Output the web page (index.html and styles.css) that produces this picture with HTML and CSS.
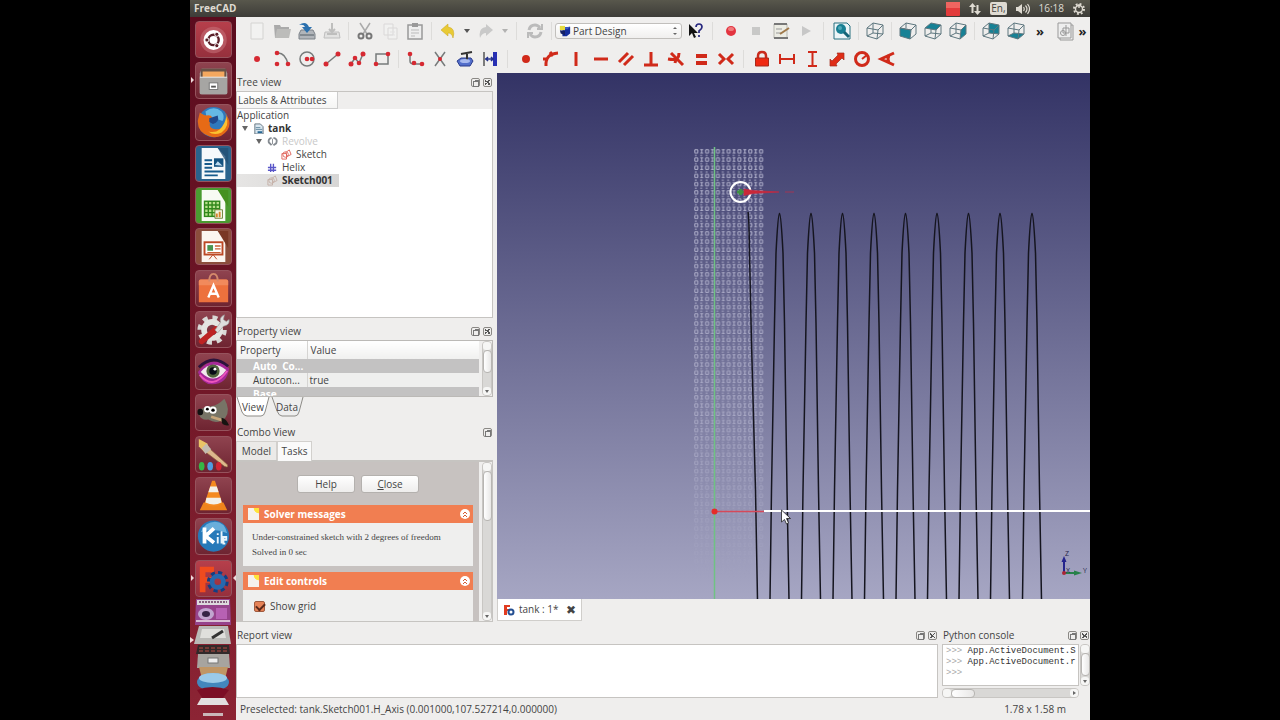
FILE: index.html
```html
<!DOCTYPE html>
<html lang="en">

<head>
    <meta charset="UTF-8">
    <meta name="viewport" content="width=device-width, initial-scale=1.0">
    <title>FreeCAD</title>
    <link rel="stylesheet" href="styles.css">
</head>

<body>
    <div class="desktop">
        <header class="topbar">
            <span class="app-name">FreeCAD</span>
            <div class="indicators">
                <svg width="14" height="14" viewBox="0 0 14 14"><rect width="14" height="14" rx="1" fill="#e23b3b"/><rect width="14" height="6" fill="#ee6560"/></svg>
                <svg width="12" height="12" viewBox="0 0 12 12" fill="#dfdbd2"><path d="M3.500 0L7 4H4.500V10H2.500V4H0z"/><path d="M8.500 12L5 8H7.500V2H9.500V8H12z"/></svg>
                <span class="lang">En,</span>
                <svg width="14" height="12" viewBox="0 0 14 12" fill="none" stroke="#dfdbd2"><path d="M0 4h2l4-3v10l-4-3H0z" fill="#dfdbd2" stroke="none"/><path d="M7.500 4q1.500 2 0 4M9.500 2.500q3 3.500 0 7M11.500 1q4 5 0 10" stroke-width="1.200"/></svg>
                <span class="clock">16:18</span>
                <svg width="12" height="12" viewBox="0 0 12 12" fill="none" stroke="#dfdbd2"><circle cx="6" cy="6" r="5" stroke-width="2" stroke-dasharray="1.900 2.027"/><circle cx="6" cy="6" r="3.500" stroke-width="1.400"/><path d="M6 1v4" stroke-width="1.400"/></svg>
            </div>
        </header>

        <div class="workspace">
            <nav class="launcher">
                <div class="tiles">
                    <button class="tile tile-red" aria-label="Dash"><svg viewBox="0 0 37 37"><circle cx="18.500" cy="19" r="14" fill="#c97880" opacity=".5"/><circle cx="18.500" cy="19" r="10.500" fill="#fff"/><circle cx="18.500" cy="19" r="5.500" fill="none" stroke="#5b2029" stroke-width="2.500"/><g fill="#5b2029" stroke="#fff"><circle cx="11.500" cy="19" r="2.200"/><circle cx="22" cy="13" r="2.200"/><circle cx="22" cy="25" r="2.200"/></g></svg></button>
                    <button class="tile running" aria-label="Files"><svg viewBox="0 0 37 37"><path d="M6 6h25l2 5v20q0 2-2 2H6q-2 0-2-2V11z" fill="#b5b3af"/><rect x="5" y="6" width="27" height="9" fill="#675348"/><rect x="7" y="9" width="23" height="6" fill="#f4a85f"/><rect x="4" y="15" width="29" height="18" rx="1" fill="#a6a5a3"/><path d="M4 15h29" stroke="#eee"/><rect x="14" y="21" width="9" height="7" fill="#fff" stroke="#777"/><path d="M16 25h5" stroke="#555" stroke-width="2"/></svg></button>
                    <button class="tile" aria-label="Firefox"><svg viewBox="0 0 37 37"><circle cx="18.500" cy="18" r="16" fill="#2f79bd"/><path d="M10 7q9-7 17 0 4 5 1 10l-8-3-8 3z" fill="#65b9e5"/><path d="M4 8q4 3 7 3 5-1 6 2l-2 5q-2 5 3 7 9 3 13-6 3-6-1-11 9 10 3 19-8 10-19 6Q1 29 2 16z" fill="#e66a16"/><path d="M32 12q4 11-5 17-8 4-14-1 7 2 12-2 6-6 7-14z" fill="#fbc12f"/><path d="M14 14l9-3q2 7-5 9l-4-2z" fill="#20498d"/></svg></button>
                    <button class="tile tile-blue" aria-label="Writer"><svg viewBox="0 0 37 37"><path d="M6 2h17l8 9v24H6z" fill="#f6f9fb"/><path d="M23 2h11v18z" fill="#235076" opacity=".8"/><g stroke="#175b8c" stroke-width="2"><path d="M9 15h8M9 19h8M9 23h8M9 27h20M9 31h14"/></g><rect x="19" y="13" width="10" height="9" fill="#14527f"/><path d="M20 20l3-4 5 5z" fill="#bedbf0"/></svg></button>
                    <button class="tile tile-green" aria-label="Calc"><svg viewBox="0 0 37 37"><path d="M6 2h17l8 9v24H6z" fill="#f8fbf3"/><path d="M23 2h11v18z" fill="#45911f"/><rect x="9" y="14" width="16" height="16" fill="#b9e18c" stroke="#30881b" stroke-width="1.500"/><path d="M13 14v16M17 14v16M21 14v16M9 18h16M9 22h16M9 26h16" stroke="#30881b" stroke-width="1.500"/><path d="M20 23h8v9h-8z" fill="#f4f8e5" stroke="#70843b"/><path d="M22 31v-4M25 31v-6" stroke="#d7842d" stroke-width="2"/></svg></button>
                    <button class="tile tile-brown" aria-label="Impress"><svg viewBox="0 0 37 37"><path d="M6 2h17l8 9v24H6z" fill="#fbf5f0"/><path d="M23 2h11v18z" fill="#7a3825"/><rect x="9" y="14" width="19" height="13" fill="#fff" stroke="#bc4825" stroke-width="2"/><rect x="12" y="17" width="6" height="6" fill="#4a9451"/><path d="M20 18h6M20 21h6M12 25h14" stroke="#c96036" stroke-width="1.500"/><path d="M14 32l4-5 4 5" fill="none" stroke="#bc4825"/></svg></button>
                    <button class="tile" aria-label="Software Center"><svg viewBox="0 0 37 37"><path d="M3 11q0-2 2-2h27q2 0 2 2v22H3z" fill="#ed713d"/><path d="M3 11q0-2 2-2h27q2 0 2 2v4H3z" fill="#f18a5c"/><path d="M14 11q0-8 4.500-8t4.500 8" fill="none" stroke="#d5896b" stroke-width="2"/><path d="M13 28l5.500-13 5.500 13M15 24h7" fill="none" stroke="#fff" stroke-width="2.500"/></svg></button>
                    <button class="tile" aria-label="System Settings"><svg viewBox="0 0 37 37"><circle cx="17" cy="19" r="13" fill="none" stroke="#d9d9d6" stroke-width="5" stroke-dasharray="5.200 5.010"/><circle cx="17" cy="19" r="8.500" fill="none" stroke="#e4e4e1" stroke-width="6"/><path d="M6 31L21 18" stroke="#bd2323" stroke-width="6" stroke-linecap="round"/><path d="M20 19l6-8q-2-5 4-8l-1 5 3 2 3-2q1 6-6 7l-6 7z" fill="#ddd" stroke="#999" stroke-width=".7"/></svg></button>
                    <button class="tile" aria-label="Viewer"><svg viewBox="0 0 37 37"><path d="M2 19Q17-1 35 15q-2 17-18 17Q6 32 2 19z" fill="#a52998"/><path d="M5 19q12-14 27-2-12 17-27 2z" fill="#f3e9ed"/><circle cx="18" cy="18" r="7" fill="#50633d"/><circle cx="18" cy="18" r="4" fill="#080c17"/><circle cx="20" cy="16" r="1.500" fill="#fff"/><path d="M3 14Q18-1 34 13" fill="none" stroke="#2c143c" stroke-width="3"/><path d="M4 22q14 17 29-4" fill="none" stroke="#ed55bd" stroke-width="2"/></svg></button>
                    <button class="tile" aria-label="GIMP"><svg viewBox="0 0 37 37"><path d="M3 17q5-5 13-5 7-1 14-8 7 12 1 20-8 8-18 2-8 1-10-6z" fill="#777466"/><circle cx="12" cy="15" r="3.500" fill="#fff"/><circle cx="18" cy="16" r="3.800" fill="#fff"/><circle cx="12" cy="15" r="1.500"/><circle cx="18" cy="16" r="1.800"/><ellipse cx="4.500" cy="18" rx="3" ry="3.500" fill="#111"/><path d="M16 23l13 4" stroke="#c6a57a" stroke-width="3"/><path d="M27 24q5 1 8 8-8 1-8-5z" fill="#161411"/></svg></button>
                    <button class="tile" aria-label="Paint"><svg viewBox="0 0 37 37"><path d="M12 10L33 29q2 4-3 2L9 15z" fill="#ddb98c" stroke="#8b603c" stroke-width=".7"/><path d="M3 2l9 5 2 6-5 3-6-6z" fill="#eac466"/><path d="M11 7l5 6-6 5-4-6z" fill="#c3bcb2"/><ellipse cx="6" cy="31" rx="3" ry="4.500" fill="#35b846"/><ellipse cx="15" cy="31" rx="3" ry="4.500" fill="#4e9ee3"/><ellipse cx="24" cy="31" rx="3" ry="4.500" fill="#cf2635"/></svg></button>
                    <button class="tile" aria-label="VLC"><svg viewBox="0 0 37 37"><path d="M8 26h21l4 8H4z" fill="#ef841c"/><path d="M17 3h3l8 24q-9 6-19 0z" fill="#f58a1f"/><path d="M15 9h7l2 6H13zM11 21h15l1 5q-8 4-17 0z" fill="#f3f1e9"/></svg></button>
                    <button class="tile" aria-label="Kile"><svg viewBox="0 0 37 37"><circle cx="18.500" cy="18" r="16.500" fill="#2679b9"/><path d="M5 14Q10 3 20 3q10 0 13 12-14-6-28-1z" fill="#69aedb"/><path d="M9 9v17M19 10l-9 8 9 7" fill="none" stroke="#fff" stroke-width="4"/><path d="M23 19v7M23 15v2M27 13v13M31 26h-2v-7h3v3h-3" fill="none" stroke="#e9f4fc" stroke-width="2"/></svg></button>
                    <button class="tile tile-red running active" aria-label="FreeCAD"><svg viewBox="0 0 37 37"><path d="M4 6h15v6H10v5h8v6h-8v10H4z" fill="#f04b1e"/><circle cx="23" cy="22" r="9" fill="none" stroke="#123e83" stroke-width="5" stroke-dasharray="4 3.070"/><circle cx="23" cy="22" r="6" fill="none" stroke="#2868ae" stroke-width="5"/></svg></button>
                </div>
                <!-- folded icons at the end of the dock -->
                <div class="stack">
                    <svg viewBox="0 0 46 122">
                        <path d="M6 2h34l1 26H5z" fill="#96438c"/><path d="M7 3h32v5H7z" fill="#dddade"/><path d="M9 5h28" stroke="#85617e" stroke-width="2" stroke-dasharray="2 1"/><ellipse cx="16" cy="17" rx="8" ry="6" fill="#c1a5cf"/><ellipse cx="16" cy="17" rx="4" ry="3" fill="#352446"/><path d="M26 11h11v11H26z" fill="#b761b4"/><path d="M6 24h34" stroke="#d9bfd5" stroke-width="2"/>
                        <path d="M9 29h29l3 18H4z" fill="#babab7"/><path d="M12 32h22l2 9H10z" fill="#dfdfdc"/><path d="M22 41l11-7" stroke="#333" stroke-width="3"/><path d="M0 40l4 3-4 3z" fill="#efd7d8"/>
                        <path d="M8 48h31l1 9H6z" fill="#31292a"/><path d="M9 51h28M9 54h28" stroke="#b64c42" stroke-dasharray="4 2"/>
                        <path d="M8 57h31l1 14H7z" fill="#a7a49f"/><rect x="18" y="61" width="10" height="5" fill="#eee" stroke="#777"/>
                        <path d="M9 70h29l-3 12H12z" fill="#c09665"/><ellipse cx="23" cy="85" rx="16" ry="9" fill="#4387bd"/><ellipse cx="23" cy="81" rx="14" ry="5" fill="#9bcae8"/>
                        <path d="M7 93q15-6 32 0l-7 9H13z" fill="#7c0e25"/><path d="M11 101h24l4 7H7z" fill="#e2dfdf"/><path d="M13 119h20v-3H13z" fill="#cab7b9"/>
                    </svg>
                </div>
            </nav>

            <main class="app">
                <div class="toolbars">
                    <div class="toolbar">
                        <button class="tool off" aria-label="New"><svg viewBox="0 0 20 20"><path d="M4 2h12v16H4z" fill="#f4f4f3" stroke="#c9c9c7"/></svg></button>
                        <button class="tool" aria-label="Open"><svg viewBox="0 0 20 20"><path d="M2 4h6l1 2h8v11H3z" fill="#aaa"/><path d="M5 8h14l-2 9H3z" fill="#bcbcba"/></svg></button>
                        <button class="tool" aria-label="Save"><svg viewBox="0 0 20 20"><path d="M4 9h12l2 4v5H2v-5z" fill="#b1b5ba" stroke="#7c8289"/><path d="M3 14h14" stroke="#555e66"/><path d="M2 4q7-5 10 2h3l-5 6-5-6h3Q7 3 2 4z" fill="#2b70ae"/></svg></button>
                        <button class="tool off" aria-label="Print"><svg viewBox="0 0 20 20"><path d="M3 11h14l1 6H2z" fill="#ddd" stroke="#aaa"/><path d="M10 2v9M7 8l3 3 3-3M5 13h10" fill="none" stroke="#aaa" stroke-width="2"/></svg></button>
                        <span class="sep"></span>
                        <button class="tool" aria-label="Cut"><svg viewBox="0 0 20 20"><path d="M5 2l7 11M15 2L8 13" stroke="#aaa" stroke-width="1.500"/><circle cx="6" cy="15" r="2.500" fill="none" stroke="#777" stroke-width="2"/><circle cx="14" cy="15" r="2.500" fill="none" stroke="#777" stroke-width="2"/></svg></button>
                        <button class="tool off" aria-label="Copy"><svg viewBox="0 0 20 20"><path d="M4 3h9v11H4zM8 7h9v11H8z" fill="#f3f3f2" stroke="#d1cfcf"/><path d="M10 11h5M10 14h5" stroke="#ddd"/></svg></button>
                        <button class="tool" aria-label="Paste"><svg viewBox="0 0 20 20"><path d="M3 4h14v14H3z" fill="#eee" stroke="#999" stroke-width="1.500"/><path d="M7 2h6v4H7z" fill="#999"/><path d="M6 9h8M6 12h8M6 15h4" stroke="#bbb"/></svg></button>
                        <span class="sep"></span>
                        <button class="tool" aria-label="Undo"><svg viewBox="0 0 20 20"><path d="M3 9l7-6v3q8 1 5 11-1-5-5-5v3z" fill="#e9ca35" stroke="#c9a51c" stroke-width=".5"/></svg></button>
                        <button class="drop" aria-label="Undo list"><svg viewBox="0 0 8 8"><path d="M1 2h6L4 6z" fill="#555"/></svg></button>
                        <button class="tool off" aria-label="Redo"><svg viewBox="0 0 20 20"><path d="M17 9l-7-6v3q-8 1-6 11 2-5 6-5v3z" fill="#bababa"/></svg></button>
                        <button class="drop off" aria-label="Redo list"><svg viewBox="0 0 8 8"><path d="M1 2h6L4 6z" fill="#999"/></svg></button>
                        <span class="sep wide"></span>
                        <button class="tool" aria-label="Refresh"><svg viewBox="0 0 20 20" fill="none" stroke="#bbb" stroke-width="3"><path d="M4 9q1-5 6-5 3 0 5 3M16 11q-1 5-6 5-3 0-5-3"/><path d="M17 3v5h-5M3 17v-5h5" stroke-width="2"/></svg></button>
                        <span class="sep"></span>
                        <label class="workbench">
                            <svg viewBox="0 0 14 14"><path d="M4 3l9-1v8l-4 3H4z" fill="#152e9c"/><path d="M1 1h6v5H1z" fill="#e5db41"/><path d="M1 6l6 1v5L2 10z" fill="#142064"/><path d="M7 3l6-1-3 3H7z" fill="#3c5dc5"/></svg>
                            <select aria-label="Workbench"><option>Part Design</option></select>
                            <svg class="updown" viewBox="0 0 6 10"><path d="M1 3h4L3 1zM1 7h4L3 9z" fill="#666"/></svg>
                        </label>
                        <button class="tool" aria-label="What's this"><svg viewBox="0 0 20 20"><path d="M4 3v12l3-3 2 5 2-1-2-4h4z" fill="#111"/><path d="M11 6q0-3 3-3 3 0 3 3 0 2-3 4v2M14 14v2" fill="none" stroke="#28287f" stroke-width="1.700"/></svg></button>
                        <span class="sep wide"></span>
                        <button class="tool" aria-label="Record macro"><svg viewBox="0 0 20 20"><circle cx="10" cy="10" r="5" fill="#e33440"/><ellipse cx="10" cy="8" rx="3" ry="2" fill="#f07a7c"/></svg></button>
                        <button class="tool off" aria-label="Stop macro"><svg viewBox="0 0 20 20"><path d="M6 6h8v8H6z" fill="#b8b8b8"/></svg></button>
                        <button class="tool" aria-label="Macros"><svg viewBox="0 0 20 20"><path d="M3 3h13v14H3z" fill="#ecece4" stroke="#b8b8b0"/><path d="M3 3h13M3 17h14" stroke="#777" stroke-width="2"/><path d="M5 8h6M5 12h5" stroke="#999"/><path d="M9 13l9-6" stroke="#9f784a" stroke-width="2"/></svg></button>
                        <button class="tool off" aria-label="Run macro"><svg viewBox="0 0 20 20"><path d="M6 5l9 5-9 5z" fill="#b7b7b7"/></svg></button>
                        <span class="sep wide"></span>
                        <button class="tool" aria-label="Fit all"><svg viewBox="0 0 20 20"><path d="M2 2h13l3 3v13H2z" fill="#edf5f7" stroke="#287080"/><circle cx="9" cy="8" r="5" fill="#187f93"/><path d="M12 11l5 5" stroke="#156476" stroke-width="3"/><circle cx="8" cy="7" r="2" fill="#4eaaba"/></svg></button>
                        <span class="sep"></span>
                        <button class="tool" aria-label="Axonometric"><svg class="cube" viewBox="0 0 20 20"><path d="M2 7l6-5 10 2-5 5zM2 7v8l10 3 1-9M12 18l6-5V4M8 2v10l-6 3M8 12l10 1"/></svg></button>
                        <span class="sep"></span>
                        <button class="tool" aria-label="Front"><svg class="cube" viewBox="0 0 20 20"><path class="face" d="M2 7l11 2-1 9-10-3z"/><path d="M2 7l6-5 10 2-5 5zM12 18l6-5V4M8 2v5"/></svg></button>
                        <button class="tool" aria-label="Top"><svg class="cube" viewBox="0 0 20 20"><path class="face" d="M2 7l6-5 10 2-5 5z"/><path d="M2 7v8l10 3 1-9M12 18l6-5V4M8 8v4l-6 3M8 12l10 1"/></svg></button>
                        <button class="tool" aria-label="Right"><svg class="cube" viewBox="0 0 20 20"><path class="face" d="M13 9l5-5v9l-6 5z"/><path d="M13 9L2 7l6-5 10 2M2 7v8l10 3M8 2v10l-6 3M8 12l4 1"/></svg></button>
                        <span class="sep"></span>
                        <button class="tool" aria-label="Rear"><svg class="cube" viewBox="0 0 20 20"><path class="face" d="M8 2l10 2v9L8 12z"/><path d="M8 2L2 7v8l10 3 1-9L2 7M13 9l5-5M12 18l6-5M2 15l6-3"/></svg></button>
                        <button class="tool" aria-label="Bottom"><svg class="cube" viewBox="0 0 20 20"><path class="face" d="M2 15l6-3 10 1-6 5z"/><path d="M2 15V7l6-5 10 2-5 5L2 7M13 9l-1 9M18 4v9M8 2v10"/></svg></button>
                        <button class="more" aria-label="More views">»</button>
                        <button class="tool" aria-label="New sketch"><svg viewBox="0 0 20 20" fill="none" stroke="#999"><path d="M3 2h13v15H3z" fill="#eee"/><path d="M16 4h2v15H5v-2"/><circle cx="8" cy="12" r="2.500"/><path d="M8 7h6v5H8zM11 4v11"/></svg></button>
                        <button class="more last" aria-label="More tools">»</button>
                    </div>

                    <div class="toolbar">
                        <button class="tool" aria-label="Point"><svg class="geo" viewBox="0 0 20 20"><circle cx="10" cy="10" r="3"/></svg></button>
                        <button class="tool" aria-label="Arc"><svg class="geo" viewBox="0 0 20 20"><path d="M5 4q8-1 11 11"/><circle cx="5" cy="4" r="2.300"/><circle cx="16" cy="15" r="2.300"/><circle cx="5" cy="15" r="2.300"/></svg></button>
                        <button class="tool" aria-label="Circle"><svg class="geo" viewBox="0 0 20 20"><circle class="wire" cx="10" cy="10" r="7"/><circle cx="10" cy="10" r="2.300"/><circle cx="15" cy="10" r="2.300"/></svg></button>
                        <button class="tool" aria-label="Line"><svg class="geo" viewBox="0 0 20 20"><path d="M4 15L16 5"/><circle cx="4" cy="15" r="2.500"/><circle cx="16" cy="5" r="2.500"/></svg></button>
                        <button class="tool" aria-label="Polyline"><svg class="geo" viewBox="0 0 20 20"><path d="M4 15l4-6 4 5 4-9"/><circle cx="4" cy="15" r="2.500"/><circle cx="8" cy="9" r="2.300"/><circle cx="12" cy="14" r="2.300"/><circle cx="16" cy="5" r="2.500"/></svg></button>
                        <button class="tool" aria-label="Rectangle"><svg class="geo" viewBox="0 0 20 20"><path d="M4 5h12v10H4z"/><circle cx="16" cy="5" r="2.300"/><circle cx="4" cy="15" r="2.300"/></svg></button>
                        <span class="sep"></span>
                        <button class="tool" aria-label="Fillet"><svg class="geo" viewBox="0 0 20 20"><path d="M5 5v7q0 3 4 3h8"/><circle cx="5" cy="5" r="2.300"/><circle cx="9" cy="14" r="2.300"/><circle cx="17" cy="15" r="2.300"/></svg></button>
                        <button class="tool" aria-label="Trim"><svg class="geo" viewBox="0 0 20 20"><path d="M5 3l10 14M15 3L5 17"/><circle cx="10" cy="10" r="2"/></svg></button>
                        <button class="tool" aria-label="External geometry"><svg viewBox="0 0 20 20"><path d="M2 12l4-3h10l2 3-3 5H5z" fill="#526ecb" stroke="#2b3c8c"/><path d="M6 5l11-2M12 4v7" stroke="#333" stroke-width="2"/><ellipse cx="10" cy="12" rx="5" ry="2" fill="#a7b9ef"/></svg></button>
                        <button class="tool" aria-label="Construction mode"><svg viewBox="0 0 20 20"><path d="M4 3v14" stroke="#555" stroke-width="1.500"/><path d="M15 3v14" stroke="#2730b3" stroke-width="4"/><path d="M5 10h9M8 8l-2 2 2 2M11 8l2 2-2 2" fill="none" stroke="#23318d" stroke-width="1.500"/></svg></button>
                        <span class="sep wide"></span>
                        <button class="tool" aria-label="Coincident"><svg class="con" viewBox="0 0 20 20"><circle cx="10" cy="10" r="2.500" fill="#e12b16"/></svg></button>
                        <button class="tool" aria-label="Point on object"><svg class="con" viewBox="0 0 20 20"><path d="M5 17Q4 5 17 4M2 10h5M9 3l3 4"/></svg></button>
                        <button class="tool" aria-label="Vertical"><svg class="con" viewBox="0 0 20 20"><path d="M10 3v14"/></svg></button>
                        <button class="tool" aria-label="Horizontal"><svg class="con" viewBox="0 0 20 20"><path d="M3 10h14"/></svg></button>
                        <button class="tool" aria-label="Parallel"><svg class="con" viewBox="0 0 20 20"><path d="M3 13l9-9M8 16l9-9"/></svg></button>
                        <button class="tool" aria-label="Perpendicular"><svg class="con" viewBox="0 0 20 20"><path d="M10 3v12M3 16h14"/></svg></button>
                        <button class="tool" aria-label="Tangent"><svg class="con" viewBox="0 0 20 20"><path d="M5 4l12 12M2 10q6 1 9 0 2-2 2-6M10 10l-1 4"/></svg></button>
                        <button class="tool" aria-label="Equal"><svg class="con" viewBox="0 0 20 20"><path d="M5 7h11M5 14h11" stroke-width="4"/></svg></button>
                        <button class="tool" aria-label="Symmetric"><svg class="con" viewBox="0 0 20 20"><path d="M3 5l5 5-5 5M17 5l-5 5 5 5"/></svg></button>
                        <span class="sep wide"></span>
                        <button class="tool" aria-label="Lock"><svg viewBox="0 0 20 20"><path d="M6 10V7q0-4 4-4t4 4v3" fill="none" stroke="#c92b1d" stroke-width="2.500"/><path d="M3.500 9h13v8h-13z" fill="#ef2912" stroke="#a72b1d"/></svg></button>
                        <button class="tool" aria-label="Horizontal distance"><svg class="con thin" viewBox="0 0 20 20"><path d="M3 5v10M17 5v10M3 10h14"/></svg></button>
                        <button class="tool" aria-label="Vertical distance"><svg class="con thin" viewBox="0 0 20 20"><path d="M6 3h9M6 17h9M10.500 3v14"/></svg></button>
                        <button class="tool" aria-label="Length"><svg viewBox="0 0 20 20"><path d="M3 17v-7l2 2 6-6-1-2h7v7l-2-2-6 6 1 2z" fill="#df2d17" stroke="#a52b1d" stroke-width=".7"/></svg></button>
                        <button class="tool" aria-label="Radius"><svg class="con" viewBox="0 0 20 20"><circle cx="10" cy="10" r="6.500"/><path d="M10 10l5-4" stroke-width="2"/></svg></button>
                        <button class="tool" aria-label="Angle"><svg class="con" viewBox="0 0 20 20"><path d="M17 4L4 10l13 6M12 6q-2 4 0 8"/></svg></button>
                    </div>
                </div>

                <div class="main-area">
                    <aside class="side">
                        <section class="dock tree-dock">
                            <div class="dock-title"><h2>Tree view</h2><button class="mini float" aria-label="Float"></button><button class="mini close" aria-label="Close panel"></button></div>
                            <div class="tree-box">
                                <div class="tree-head"><span>Labels &amp; Attributes</span></div>
                                <ul class="tree">
                                    <li>Application</li>
                                    <li class="lv1 bold"><i class="arrow"></i><svg viewBox="0 0 12 12"><path d="M2 1h6l3 3v8H2z" fill="#d8e6ef" stroke="#61717d"/><path d="M3 5h5M3 7h7" stroke="#63899f"/><path d="M5 9h5v2H5z" fill="#276894"/></svg>tank</li>
                                    <li class="lv2 muted"><i class="arrow"></i><svg viewBox="0 0 12 12" fill="none" stroke="#858b91" stroke-width="2"><path d="M5 2Q1 3 2 7l3 3M7 2q5 1 3 6l-3 2"/><path d="M6 3v6" stroke-width="1"/></svg>Revolve</li>
                                    <li class="lv3"><svg viewBox="0 0 12 12" fill="none" stroke="#df6259"><path d="M1 5h5v6H1zM5 4l4-3 2 5-4 2z"/><circle cx="5" cy="6" r="3"/></svg>Sketch</li>
                                    <li class="lv2 leaf"><svg viewBox="0 0 12 12"><path d="M1 6h9M1 9h9M4 2v9M7 2v9" stroke="#5956c8" stroke-width="1.500"/></svg>Helix</li>
                                    <li class="lv2 leaf bold selected"><svg viewBox="0 0 12 12" fill="none" stroke="#c5b0a7"><path d="M1 5h5v6H1zM5 4l4-3 2 5-4 2z"/><circle cx="5" cy="6" r="3"/></svg>Sketch001</li>
                                </ul>
                            </div>
                        </section>

                        <section class="dock property-dock">
                            <div class="dock-title"><h2>Property view</h2><button class="mini float" aria-label="Float"></button><button class="mini close" aria-label="Close panel"></button></div>
                            <div class="property-box">
                                <table class="props">
                                    <thead>
                                        <tr><th>Property</th><th>Value</th></tr>
                                    </thead>
                                    <tbody>
                                        <tr class="group"><td>Auto&nbsp; Co...</td><td></td></tr>
                                        <tr><td>Autocon...</td><td>true</td></tr>
                                        <tr class="group"><td>Base</td><td></td></tr>
                                    </tbody>
                                </table>
                                <div class="vscroll"><i class="up"></i><b class="short"></b><i class="down"></i></div>
                            </div>
                            <div class="bottom-tabs">
                                <svg viewBox="0 0 72 21" preserveAspectRatio="none"><path d="M36 0l5 14q2 5 5 5h13q3 0 4-4l4-15" fill="#eee" stroke="#8d8b87"/><path d="M1 0l5 15q2 4 5 4h14q3 0 4-4l4-15" fill="#fff" stroke="#8d8b87"/></svg>
                                <button>View</button><button>Data</button>
                            </div>
                        </section>

                        <section class="dock combo-dock">
                            <div class="dock-title"><h2>Combo View</h2><button class="mini float" aria-label="Float"></button></div>
                            <div class="tabs"><button class="tab">Model</button><button class="tab current">Tasks</button></div>
                            <div class="tasks">
                                <div class="task-list">
                                    <div class="actions"><button class="btn">Help</button><button class="btn"><u>C</u>lose</button></div>
                                    <div class="task">
                                        <div class="task-head"><span class="note"></span><h3>Solver messages</h3><button class="fold" aria-label="Collapse"><svg viewBox="0 0 10 10"><circle cx="5" cy="5" r="5" fill="#fff"/><path d="M3 5l2-2 2 2M3 8l2-2 2 2" fill="none" stroke="#d75c34"/></svg></button></div>
                                        <div class="task-body solver"><p>Under-constrained sketch with 2 degrees of freedom</p><p>Solved in 0 sec</p></div>
                                    </div>
                                    <div class="task">
                                        <div class="task-head"><span class="note"></span><h3>Edit controls</h3><button class="fold" aria-label="Collapse"><svg viewBox="0 0 10 10"><circle cx="5" cy="5" r="5" fill="#fff"/><path d="M3 5l2-2 2 2M3 8l2-2 2 2" fill="none" stroke="#d75c34"/></svg></button></div>
                                        <div class="task-body"><label class="check"><input type="checkbox" checked>Show grid</label></div>
                                    </div>
                                </div>
                                <div class="vscroll"><i class="up"></i><b class="long"></b><i class="down"></i></div>
                            </div>
                        </section>
                    </aside>

                    <div class="mdi">
                        <div class="view3d">
                            <svg width="100%" height="100%">
                                <defs>
                                    <pattern id="grid" x="197" y="76" width="10.800" height="8.200" patternUnits="userSpaceOnUse">
                                        <path d="M.8 .7h3v3.300h-3zM6.200 .7h3M7.700 .7v3.300M6.200 4h3M.8 6.500h2M6.200 6.500h2" fill="none" stroke="#dcdcee" stroke-width=".8"/>
                                    </pattern>
                                    <linearGradient id="fade" x2="0" y2="1">
                                        <stop offset="0" stop-color="#fff" stop-opacity=".9"/>
                                        <stop offset=".6" stop-color="#fff" stop-opacity=".6"/>
                                        <stop offset="1" stop-color="#fff" stop-opacity="0"/>
                                    </linearGradient>
                                    <mask id="gridMask"><rect x="197" y="75" width="70" height="430" fill="url(#fade)"/></mask>
                                    <path id="turn" d="M-9.500 527L-8 417-5 250-3.500 180Q-1.500 141 0 140.500 1.500 141 3.500 180L5 250 7.500 417 9.500 527"/>
                                </defs>
                                <rect x="197" y="75" width="70" height="430" fill="url(#grid)" mask="url(#gridMask)"/>
                                <path d="M217.500 74v453" stroke="#6fc283" stroke-width="1.500"/>
                                <g fill="none" stroke="#15151f" stroke-width="1.500">
                                    <path d="M251 139q1 3 1.500 41l2 90 4 147 2 110"/>
                                    <use href="#turn" x="282.500"/><use href="#turn" x="314"/><use href="#turn" x="345.500"/><use href="#turn" x="377"/><use href="#turn" x="408.500"/><use href="#turn" x="440"/><use href="#turn" x="471.500"/><use href="#turn" x="503"/><use href="#turn" x="535"/>
                                </g>
                                <rect x="267" y="437" width="100%" height="2" fill="#fff"/>
                                <path d="M217 438.500h50" stroke="#d5495a" stroke-width="1.500"/>
                                <circle cx="217.500" cy="438.500" r="3" fill="#e52c29"/>
                                <circle cx="243.500" cy="119" r="10" fill="none" stroke="#fff" stroke-width="2"/>
                                <path d="M240 119h7M243.500 116v6" stroke="#3e9143" stroke-width="3"/>
                                <path d="M247 116l9 1.500 26 1.500-26 1.500-9 2zM288 119h9" fill="#ca2838" stroke="#c22b45" stroke-width=".7"/>
                                <path d="M284.500 437v12l3-2.500 2 4.500 2-1-2-4.500h4z" fill="#fff" stroke="#222" stroke-width=".8"/>
                                <g class="axis">
                                    <path d="M567 499v-11" stroke="#24248d" stroke-width="2"/><path d="M564.500 489l2.500-6 2.500 6z" fill="#24248d"/>
                                    <path d="M567 500h11" stroke="#278149" stroke-width="2"/><path d="M577 497.500l8 2.500-8 2.500z" fill="#278149"/>
                                    <circle cx="567" cy="500" r="2" fill="#aa2435"/>
                                    <text x="568" y="483">Z</text><text x="569" y="500">X</text><text x="586" y="500">Y</text>
                                </g>
                            </svg>
                        </div>
                        <div class="doc-tabs">
                            <div class="doc-tab"><svg viewBox="0 0 12 12"><path d="M1 1h6v2H4v2h3v2H4v4H1z" fill="#e23c20"/><circle cx="8" cy="8" r="2.500" fill="none" stroke="#244f91" stroke-width="2"/></svg><span>tank : 1*</span><button class="x" aria-label="Close document">✖</button></div>
                        </div>
                    </div>
                </div>

                <div class="bottom">
                    <section class="report">
                        <div class="dock-title"><h2>Report view</h2><button class="mini float" aria-label="Float"></button><button class="mini close" aria-label="Close panel"></button></div>
                        <div class="report-box"></div>
                    </section>
                    <section class="python">
                        <div class="dock-title"><h2>Python console</h2><button class="mini float" aria-label="Float"></button><button class="mini close" aria-label="Close panel"></button></div>
                        <div class="console-wrap">
                            <pre class="console"><span>&gt;&gt;&gt;</span> App.ActiveDocument.S
<span>&gt;&gt;&gt;</span> App.ActiveDocument.r
<span>&gt;&gt;&gt;</span></pre>
                            <div class="vscroll"><i class="up"></i><b class="short"></b><i class="down"></i></div>
                            <div class="hscroll"><i class="left"></i><b></b><i class="right"></i></div>
                        </div>
                    </section>
                </div>

                <footer class="status"><span>Preselected: tank.Sketch001.H_Axis (0.001000,107.527214,0.000000)</span><span>1.78 x 1.58 m</span></footer>
            </main>
        </div>
    </div>
</body>

</html>
```

FILE: styles.css
```css
* {
    box-sizing: border-box;
}

body {
    margin: 0;
    background: #000;
    color: #444;
    font-family: "Open Sans", "Noto Sans", sans-serif;
    font-size: 10px;
    line-height: 13px;
}

button {
    margin: 0;
    padding: 0;
    border: 0;
    background: none;
    color: inherit;
    font: inherit;
}

svg {
    display: block;
    flex: none;
}

h2,
h3,
p,
ul,
pre {
    margin: 0;
    padding: 0;
    font-size: inherit;
    font-weight: normal;
    list-style: none;
}

.desktop {
    display: flex;
    flex-direction: column;
    max-width: 900px;
    height: 100vh;
    margin: 0 auto;
    background: #efeeed;
    overflow: hidden;
}

/* top panel */
.topbar {
    display: flex;
    align-items: center;
    justify-content: space-between;
    flex: none;
    height: 17px;
    padding: 0 5px 0 4px;
    background: linear-gradient(#58574c, #3d3c38);
    color: #dfdbd2;
}

.app-name {
    font-weight: bold;
}

.indicators {
    display: flex;
    align-items: center;
    gap: 9px;
}

.lang {
    height: 13px;
    padding: 0 1px;
    border-radius: 2px;
    background: #dfdbd2;
    color: #45443f;
}

.workspace {
    display: flex;
    flex: 1;
    min-height: 0;
}

/* launcher */
.launcher {
    display: flex;
    flex-direction: column;
    flex: none;
    width: 46px;
    padding-top: 4px;
    background: linear-gradient(#5b0c1e, #701727 50%, #8c2434);
}

.tiles {
    display: flex;
    flex: 1;
    flex-direction: column;
    justify-content: space-between;
    align-items: center;
}

.tile {
    position: relative;
    width: 37px;
    height: 37px;
    border: 1px solid #96535d;
    border-radius: 4px;
    background: linear-gradient(#8f434f, #6e2431);
}

.tile svg {
    width: 35px;
    height: 35px;
}

.tile-red {
    background: linear-gradient(#b63f4b, #96303d);
}

.tile-blue {
    background: #2a638c;
}

.tile-green {
    background: #4a9b30;
}

.tile-brown {
    background: #8b4d3c;
}

.running::before,
.active::after {
    content: "";
    position: absolute;
    top: 14px;
    left: -5px;
    border: 3px solid transparent;
    border-left-color: #eedadc;
    border-right: 0;
}

.active::after {
    right: -5px;
    left: auto;
    border-right: 3px solid #eedadc;
    border-left: 0;
}

.stack {
    flex: none;
    height: 123px;
}

/* toolbars */
.app {
    display: flex;
    flex: 1;
    flex-direction: column;
    min-width: 0;
}

.toolbars {
    flex: none;
}

.toolbar {
    display: flex;
    align-items: center;
    height: 28px;
    padding-left: 8px;
}

.tool {
    display: flex;
    justify-content: center;
    flex: none;
    width: 25px;
}

.tool svg {
    width: 20px;
    height: 20px;
}

.off {
    opacity: .7;
}

.drop {
    flex: none;
    width: 13px;
}

.drop svg {
    width: 8px;
    margin-left: 3px;
}

.sep {
    flex: none;
    width: 8px;
    height: 18px;
    background: linear-gradient(#dddcda, #dddcda) center / 1px 100% no-repeat;
}

.wide {
    width: 11px;
}

.more {
    flex: none;
    width: 24px;
    color: #222;
    font-size: 13px;
    font-weight: bold;
}

.last {
    width: 11px;
}

.cube {
    fill: none;
    stroke: #5e777f;
    stroke-width: 1;
}

.face {
    fill: #178195;
}

.geo path,
.geo .wire {
    fill: none;
    stroke: #777b7b;
    stroke-width: 1.5;
}

.geo circle {
    fill: #d62932;
}

.con {
    fill: none;
    stroke: #d02a1a;
    stroke-width: 3;
}

.thin {
    stroke-width: 2;
}

.workbench {
    display: flex;
    align-items: center;
    flex: none;
    width: 127px;
    height: 16px;
    padding: 0 3px;
    border: 1px solid #c1bfbc;
    border-radius: 3px;
    background: linear-gradient(#fff, #f0efee);
}

.workbench svg {
    width: 12px;
    height: 12px;
}

.workbench select {
    flex: 1;
    padding: 0 0 0 2px;
    border: 0;
    background: none;
    color: inherit;
    font: inherit;
    appearance: none;
}

.workbench .updown {
    width: 6px;
    height: 10px;
}

/* docks */
.main-area {
    display: flex;
    flex: 1;
    min-height: 0;
}

.side {
    display: flex;
    flex-direction: column;
    gap: 4px;
    flex: none;
    width: 261px;
    padding-right: 4px;
}

.dock-title {
    display: flex;
    align-items: center;
    gap: 3px;
    flex: none;
    height: 18px;
    padding: 0 1px;
}

.dock-title h2 {
    flex: 1;
}

.mini {
    position: relative;
    width: 9px;
    height: 9px;
    border: 1px solid #8a8885;
    border-radius: 2px;
}

.float::before {
    content: "";
    position: absolute;
    top: 2px;
    left: 1px;
    width: 4px;
    height: 4px;
    border: 1px solid #777;
}

.float::after {
    content: "";
    position: absolute;
    top: 1px;
    left: 3px;
    width: 3px;
    height: 3px;
    border: 1px solid #777;
    border-width: 1px 1px 0 0;
}

.close::before {
    content: "";
    position: absolute;
    inset: 1px;
    background:
        linear-gradient(45deg, transparent 40%, #555 40%, #555 60%, transparent 60%),
        linear-gradient(-45deg, transparent 40%, #555 40%, #555 60%, transparent 60%);
}

.tree-dock {
    display: flex;
    flex: 1;
    flex-direction: column;
    min-height: 0;
}

.tree-box {
    flex: 1;
    border: 1px solid #c6c4c1;
    background: #fff;
}

.tree-head {
    height: 17px;
    background: #efeeed;
}

.tree-head span {
    display: block;
    width: 101px;
    height: 17px;
    padding: 2px 0 0 1px;
    border-right: 1px solid #ccc;
    border-bottom: 1px solid #ccc;
    background: linear-gradient(#fff, #f5f5f4);
}

.tree li {
    display: flex;
    align-items: center;
    height: 13px;
}

.tree svg {
    width: 11px;
    height: 11px;
    margin-right: 4px;
}

.tree .lv1 {
    padding-left: 5px;
}

.tree .lv2 {
    padding-left: 19px;
}

.tree .lv3 {
    padding-left: 44px;
}

.tree .leaf {
    padding-left: 30px;
}

.arrow {
    margin-right: 5px;
    border: 3px solid transparent;
    border-top: 5px solid #666;
    border-bottom: 0;
}

.bold {
    color: #333;
    font-weight: bold;
}

.muted {
    color: #c8c8c8;
}

.selected {
    width: 102px;
    background: linear-gradient(90deg, #e6e5e4, #d7d6d5);
}

.property-dock {
    flex: none;
}

.property-box {
    display: flex;
    align-items: flex-start;
    height: 57px;
    border: 1px solid #bbb9b6;
    overflow: hidden;
}

.property-box .vscroll {
    height: 100%;
}

.props {
    flex: 1;
    border-collapse: collapse;
    table-layout: fixed;
    background: #efefee;
}

.props th {
    height: 18px;
    padding: 0 3px;
    background: linear-gradient(#fff, #f0f0ef);
    font-weight: normal;
    text-align: left;
}

.props td {
    height: 14px;
    padding: 0 2px;
    white-space: nowrap;
}

.props th:first-child,
.props td:first-child {
    width: 70px;
    border-right: 1px solid #d5d4d2;
}

.props td:first-child {
    padding: 0 0 0 16px;
}

.props .group {
    background: #c3c2c2;
    color: #fff;
    font-weight: bold;
}

.props .group td {
    border: 0;
}

.vscroll,
.hscroll {
    display: flex;
    align-items: center;
    flex: none;
    border: 1px solid #c8c6c3;
    border-radius: 4px;
    background: #d9d8d6;
}

.vscroll {
    flex-direction: column;
    width: 10px;
    margin-left: 3px;
}

.vscroll i,
.hscroll i {
    flex: none;
    width: 8px;
    height: 8px;
    border-radius: 3px;
    background: #f6f6f5;
}

.vscroll b,
.hscroll b {
    border: 1px solid #b7b5b2;
    border-radius: 4px;
    background: linear-gradient(90deg, #fff, #e8e7e6);
}

.vscroll b {
    width: 9px;
}

.short {
    height: 23px;
}

.long {
    height: 50px;
}

.vscroll .down,
.hscroll .right {
    display: grid;
    place-items: center;
}

.vscroll .down {
    margin-top: auto;
}

.down::before {
    content: "";
    border: 2px solid transparent;
    border-top: 3px solid #666;
    border-bottom: 0;
}

.bottom-tabs {
    position: relative;
    display: flex;
    height: 21px;
}

/* slanted tab outlines lie under the labels */
.bottom-tabs svg {
    position: absolute;
    width: 72px;
    height: 21px;
}

.bottom-tabs button {
    position: relative;
    width: 34px;
    height: 21px;
}

.combo-dock {
    display: flex;
    flex: none;
    flex-direction: column;
    height: 200px;
    padding-top: 1px;
}

.tabs {
    display: flex;
    height: 20px;
    border-bottom: 1px solid #c6c4c1;
}

.tab {
    width: 41px;
    border: 1px solid #d2d0cd;
    border-bottom: 0;
    background: #ebeae8;
}

.current {
    width: 35px;
    margin-bottom: -1px;
    background: #fafafa;
}

.tasks {
    display: flex;
    flex: 1;
    min-height: 0;
    border: 1px solid #c6c4c1;
}

.task-list {
    display: flex;
    flex: 1;
    flex-direction: column;
    gap: 6px;
    padding: 13px 6px 0;
    background: #c7c2c0;
    overflow: hidden;
}

.actions {
    display: flex;
    justify-content: center;
    gap: 6px;
    margin-bottom: 6px;
}

.btn {
    width: 58px;
    height: 18px;
    border: 1px solid #b4b1ae;
    border-radius: 3px;
    background: linear-gradient(#fff, #eeedec);
}

.task {
    background: #efefee;
}

.task-head {
    display: flex;
    align-items: center;
    gap: 5px;
    height: 18px;
    padding: 0 3px 0 5px;
    background: #f17e51;
    color: #fff;
    font-weight: bold;
}

.task-head h3 {
    flex: 1;
    font-weight: bold;
}

.note {
    width: 11px;
    height: 12px;
    background: radial-gradient(circle at 100% 0, #ffe43a 30%, #f5f1ed 35%);
}

.fold svg {
    width: 10px;
    height: 10px;
}

.task-body {
    padding: 9px;
}

.solver {
    height: 43px;
    padding: 7px 9px;
    font-family: "Liberation Serif", serif;
    font-size: 9px;
    line-height: 15px;
}

.check {
    display: flex;
    align-items: center;
    gap: 5px;
    height: 15px;
    padding-left: 2px;
}

.check input {
    width: 11px;
    height: 11px;
    margin: 0;
    border: 1px solid #9f5a3f;
    border-radius: 2px;
    background: #e58257;
    appearance: none;
}

.check input::before {
    content: "";
    display: block;
    width: 7px;
    height: 4px;
    margin: 1px;
    border: solid #59281a;
    border-width: 0 0 2px 2px;
    transform: rotate(-45deg);
}

/* 3D view */
.mdi {
    display: flex;
    flex: 1;
    flex-direction: column;
    min-width: 0;
}

.view3d {
    flex: 1;
    min-height: 0;
    background: linear-gradient(#333365, #a6a6c3);
    overflow: hidden;
}

.axis text {
    fill: #26264a;
    font-size: 7px;
}

.doc-tabs {
    flex: none;
    height: 23px;
}

.doc-tab {
    display: flex;
    align-items: center;
    gap: 4px;
    width: 85px;
    height: 22px;
    padding: 0 5px;
    border: 1px solid #d0cecb;
    border-top: 0;
    background: #fff;
}

.doc-tab svg {
    width: 12px;
    height: 12px;
}

.doc-tab span {
    flex: 1;
}

.doc-tab .x {
    font-size: 12px;
}

/* bottom docks */
.bottom {
    display: flex;
    gap: 4px;
    flex: none;
    height: 78px;
    padding-top: 4px;
}

.report {
    display: flex;
    flex: 1;
    flex-direction: column;
}

.report-box {
    flex: 1;
    margin-bottom: 2px;
    border: 1px solid #c6c4c1;
    background: #fff;
}

.python {
    width: 148px;
}

.console-wrap {
    display: grid;
    grid-template-columns: 1fr 10px;
    grid-template-rows: 42px 10px;
    gap: 2px 1px;
}

.console-wrap .vscroll {
    margin: 0;
}

.console {
    padding: 1px 3px;
    border: 1px solid #c6c4c1;
    background: #fff;
    color: #333;
    font-family: "Liberation Mono", monospace;
    font-size: 9px;
    line-height: 11px;
    overflow: hidden;
}

.console span {
    color: #aaa;
}

.hscroll b {
    width: 24px;
    height: 9px;
}

.hscroll .right {
    margin-left: auto;
}

.right::before {
    content: "";
    border: 2px solid transparent;
    border-left: 3px solid #666;
    border-right: 0;
}

.status {
    display: flex;
    justify-content: space-between;
    flex: none;
    height: 20px;
    padding: 3px 24px 0 4px;
}
```
